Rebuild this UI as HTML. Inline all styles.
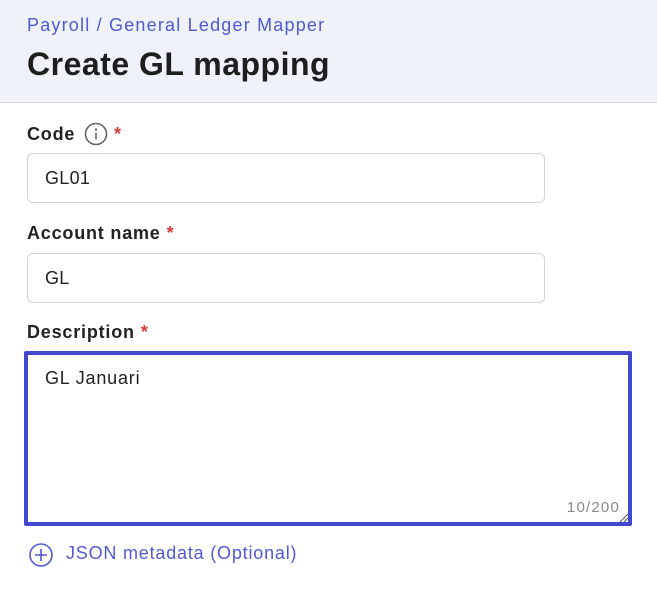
<!DOCTYPE html>
<html><head><style>
body{margin:0;width:657px;height:596px;background:#fff;font-family:"Liberation Sans",sans-serif;position:relative;overflow:hidden;color:#1f1f1f}
.hdr{position:absolute;left:0;top:0;width:657px;height:102px;background:#eff2f8;border-bottom:1px solid #d6d9de}
.bc{position:absolute;left:27px;top:15px;font-size:18px;color:#5059d6;letter-spacing:1.2px}
h1{position:absolute;left:27px;top:46px;margin:0;font-size:32px;font-weight:bold;color:#1e1e1e;letter-spacing:0.5px}
.lbl{position:absolute;left:27px;font-size:18px;font-weight:bold;color:#222;letter-spacing:0.8px}
.req{color:#d93a3a;margin-left:6px}
.inp{position:absolute;left:27px;width:516px;height:48px;border:1px solid #d3d5d9;border-radius:6px;box-sizing:content-box}
.inp span{position:absolute;left:17px;top:14px;font-size:18px;color:#222;letter-spacing:0.3px}
.ta{position:absolute;left:24px;top:351px;width:600px;height:167px;border:4px solid #4349cf;border-radius:2px}
.ta .t{position:absolute;left:17px;top:13px;font-size:18px;color:#222;letter-spacing:0.8px}
.ta .c{position:absolute;right:8px;bottom:6px;font-size:15px;color:#8a8a8a;letter-spacing:1.2px}
.json{position:absolute;left:66px;top:543px;font-size:18px;color:#5059d6;letter-spacing:0.8px}
</style></head><body>
<div class="hdr"><div class="bc">Payroll / General Ledger Mapper</div><h1>Create GL mapping</h1></div>
<div class="lbl" style="top:122px">Code <svg width="24" height="24" viewBox="0 0 24 24" style="vertical-align:-6px;margin-left:3px"><circle cx="12" cy="12" r="10.5" fill="none" stroke="#666" stroke-width="1.6"/><circle cx="12" cy="7.5" r="1.2" fill="#666"/><path d="M12 10.5v7" stroke="#666" stroke-width="1.6"/></svg><span class="req">*</span></div>
<div class="inp" style="top:153px"><span>GL01</span></div>
<div class="lbl" style="top:223px">Account name<span class="req">*</span></div>
<div class="inp" style="top:253px"><span>GL</span></div>
<div class="lbl" style="top:322px">Description<span class="req">*</span></div>
<div class="ta"><div class="t">GL Januari</div><div class="c">10/200</div>
<svg width="10" height="10" style="position:absolute;right:0;bottom:0"><path d="M2 10L10 2M6 10L10 6" stroke="#555" stroke-width="1"/></svg></div>
<svg width="26" height="26" viewBox="0 0 26 26" style="position:absolute;left:28px;top:542px"><circle cx="13" cy="13" r="11" fill="none" stroke="#5059d6" stroke-width="1.6"/><path d="M13 7v12M7 13h12" stroke="#5059d6" stroke-width="1.6"/></svg>
<div class="json">JSON metadata (Optional)</div>
</body></html>
